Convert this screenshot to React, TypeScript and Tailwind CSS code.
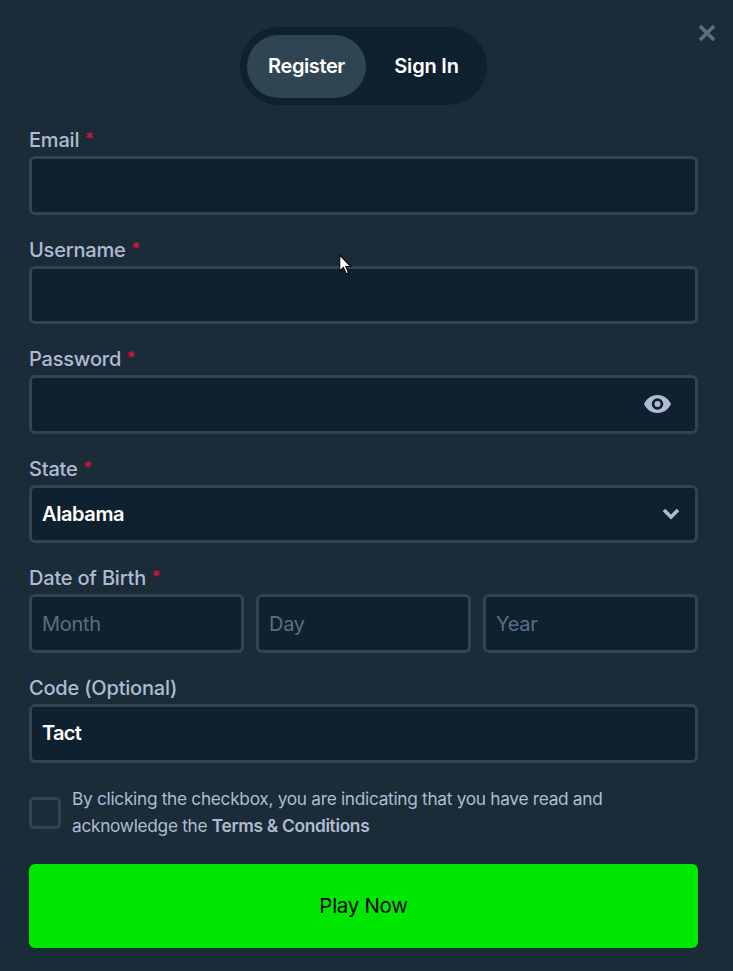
const font = "font-['Inter','Liberation_Sans',sans-serif]";

const Label = ({ text, required = true }: { text: string; required?: boolean }) => (
  <label className="flex h-[27px] mb-[3px] pt-[1px] text-[20px] leading-[27px] font-medium tracking-[-0.2px] text-[#b1bad3]">
    {text}
    {required && <span className="ml-[6px] text-[16px] leading-[22px] text-[#e9113c]">*</span>}
  </label>
);

const Box = ({ children, className = "" }: { children?: React.ReactNode; className?: string }) => (
  <div
    className={`flex items-center justify-between h-[58.6px] px-[10px] rounded-[6px] border-[3px] border-[#2f4553] bg-[#0f212e] ${className}`}
  >
    {children}
  </div>
);

const Field = ({ label, required, children }: { label: string; required?: boolean; children?: React.ReactNode }) => (
  <div className="mb-[21px]">
    <Label text={label} required={required} />
    {children}
  </div>
);

const EyeIcon = () => (
  <svg width="27" height="18" viewBox="0 0 27 18" className="text-[#b1bad3]">
    <path
      fillRule="evenodd"
      fill="currentColor"
      d="M13.5 0C20 0 24.8 4 27 9c-2.2 5-7 9-13.5 9S2.2 14 0 9C2.2 4 7 0 13.5 0zm0 3.2a5.8 5.8 0 1 0 0 11.6 5.8 5.8 0 0 0 0-11.6zm0 2.8a3 3 0 1 1 0 6 3 3 0 0 1 0-6z"
    />
  </svg>
);

const App = () => {
  return (
    <div className={`relative h-[971px] w-[733px] overflow-hidden bg-[#1a2c38] pl-[29px] pr-[35px] pt-[27px] ${font}`}>
      <button className="absolute right-[16px] top-[23px] text-[#557086]">
        <svg width="20" height="20" viewBox="0 0 20 20" fill="none" stroke="currentColor" strokeWidth="3.6">
          <path d="M3 3l14 14M17 3L3 17" />
        </svg>
      </button>

      <div className="flex justify-center">
        <div className="flex h-[78px] w-[247px] items-center rounded-full bg-[#0f212e] pl-[7px]">
          <div className="flex h-[63px] w-[119px] items-center justify-center rounded-full bg-[#2f4553] text-[20px] font-semibold tracking-[-0.4px] text-white">
            Register
          </div>
          <div className="flex h-[63px] flex-1 items-center justify-center text-[20px] font-semibold tracking-[-0.2px] text-white">
            Sign In
          </div>
        </div>
      </div>

      <div className="mt-[21px]">
        <Field label="Email" required>
          <Box />
        </Field>
        <Field label="Username" required>
          <Box />
        </Field>
        <Field label="Password" required>
          <Box className="pr-[24px]">
            <span />
            <EyeIcon />
          </Box>
        </Field>
        <Field label="State" required>
          <Box>
            <span className="text-[20px] font-semibold tracking-[-0.4px] text-white">Alabama</span>
            <svg width="18" height="12" viewBox="0 0 18 12" fill="none" stroke="#b1bad3" strokeWidth="3.6" className="mr-[5px]">
              <path d="M2 2l7 7 7-7" />
            </svg>
          </Box>
        </Field>
        <Field label="Date of Birth" required>
          <div className="grid grid-cols-3 gap-[12px]">
            {["Month", "Day", "Year"].map((item) => (
              <Box key={item}>
                <span className="pt-[1px] text-[20px] font-normal tracking-[-0.3px] text-[#557086]">{item}</span>
              </Box>
            ))}
          </div>
        </Field>
        <Field label="Code (Optional)" required={false}>
          <Box>
            <span className="text-[20px] font-semibold tracking-[-0.7px] text-white">Tact</span>
          </Box>
        </Field>
      </div>

      <div className="mt-[-8px] flex items-start gap-[11px]">
        <div className="mt-[21px] h-[32px] w-[32px] shrink-0 rounded-[5px] border-[3px] border-[#2f4553]" />
        <p className="mt-[9px] mb-[1px] whitespace-nowrap text-[17.3px] leading-[27px] tracking-[-0.3px] text-[#b1bad3]">
          By clicking the checkbox, you are indicating that you have read and
          <br />
          acknowledge the <span className="font-semibold">Terms &amp; Conditions</span>
        </p>
      </div>

      <button className="mt-[24px] flex h-[84px] w-full items-center justify-center rounded-[6px] bg-[#00e701] pt-[2px] text-[20.5px] font-normal tracking-[-0.3px] text-[#05080a]">
        Play Now
      </button>

      {/* mouse pointer in the shot */}
      <svg className="absolute left-[338px] top-[254px]" width="14" height="21" viewBox="0 0 13 20">
        <path d="M1.5 1v15l3.5-3.2 2.6 6 2.2-1-2.5-5.8h4.7z" fill="#fff" stroke="#000" strokeWidth="1" />
      </svg>
    </div>
  );
};

export default App;
